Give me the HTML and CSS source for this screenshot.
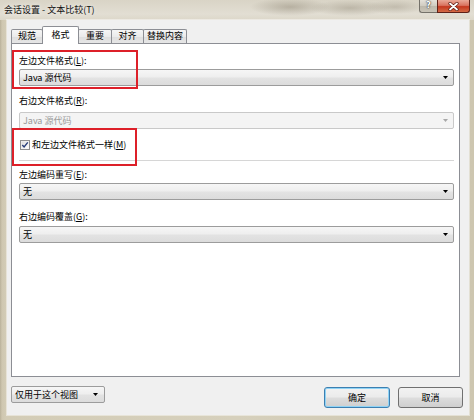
FILE: index.html
```html
<!DOCTYPE html>
<html lang="zh-CN">
<head>
<meta charset="utf-8">
<title>会话设置 - 文本比较(T)</title>
<link rel="stylesheet" href="styles.css">
</head>
<body>
<div class="titlebar">
  <span class="title">会话设置 - 文本比较(T)</span>
  <div class="caption">
    <span class="cap-help">?</span>
    <span class="cap-close">
      <svg width="11" height="9" viewBox="0 0 11 9"><path d="M2 1.5 L9 7.5 M9 1.5 L2 7.5" stroke="#5a1a10" stroke-width="3.2" stroke-linecap="round"/><path d="M2 1.5 L9 7.5 M9 1.5 L2 7.5" stroke="#ffffff" stroke-width="1.8" stroke-linecap="round"/></svg>
    </span>
  </div>
</div>
<div class="client">
  <div class="tabs">
    <span class="tab t1">规范</span>
    <span class="tab active t2">格式</span>
    <span class="tab t3">重要</span>
    <span class="tab t4">对齐</span>
    <span class="tab t5">替换内容</span>
  </div>
  <div class="panel">
    <div class="label l1">左边文件格式(<u>L</u>):</div>
    <div class="combo c1"><span>Java 源代码</span><svg class="arrow" width="5" height="3" viewBox="0 0 5 3"><path d="M0 0 H5 L2.5 3 Z" fill="#000"/></svg></div>
    <div class="label l2 dim-none">右边文件格式(<u>R</u>):</div>
    <div class="combo c2 disabled"><span>Java 源代码</span><svg class="arrow" width="5" height="3" viewBox="0 0 5 3"><path d="M0 0 H5 L2.5 3 Z" fill="#a8a8a8"/></svg></div>
    <div class="checkrow">
      <svg class="checkbox" width="10" height="10" viewBox="0 0 10 10">
        <defs><linearGradient id="cb" x1="0" y1="0" x2="1" y2="1"><stop offset="0" stop-color="#dcdcdc"/><stop offset="1" stop-color="#ffffff"/></linearGradient></defs>
        <rect x="0.5" y="0.5" width="9" height="9" fill="#f4f4f4" stroke="#8f8f8f"/>
        <rect x="1.5" y="1.5" width="7" height="7" fill="url(#cb)"/>
        <path d="M2.3 5 L4.1 7 L7.8 2.4" fill="none" stroke="#263c78" stroke-width="1.4"/>
      </svg>
      <span>和左边文件格式一样(<u>M</u>)</span>
    </div>
    <div class="separator"></div>
    <div class="label l3">左边编码重写(<u>E</u>):</div>
    <div class="combo c3"><span>无</span><svg class="arrow" width="5" height="3" viewBox="0 0 5 3"><path d="M0 0 H5 L2.5 3 Z" fill="#000"/></svg></div>
    <div class="label l4">右边编码覆盖(<u>G</u>):</div>
    <div class="combo c4"><span>无</span><svg class="arrow" width="5" height="3" viewBox="0 0 5 3"><path d="M0 0 H5 L2.5 3 Z" fill="#000"/></svg></div>
  </div>
  <div class="footer">
    <div class="combo small"><span>仅用于这个视图</span><svg class="arrow" width="5" height="3" viewBox="0 0 5 3"><path d="M0 0 H5 L2.5 3 Z" fill="#000"/></svg></div>
    <div class="buttons">
      <span class="btn default">确定</span>
      <span class="btn cancel">取消</span>
    </div>
  </div>
</div>
<div class="mark mark1"></div>
<div class="mark mark2"></div>
</body>
</html>
```

FILE: styles.css
```css
html, body {
  margin: 0;
  padding: 0;
}

body {
  width: 474px;
  height: 420px;
  overflow: hidden;
  position: relative;
  font-family: "Noto Sans CJK SC", "Noto Sans", sans-serif;
  font-size: 9px;
  color: #000;
  background:
    linear-gradient(90deg, #b9b19a 0px, #cfc7b0 2px, #d3ccb6 6px, #d6d0bc 50%, #cdc6b0 100%);
}

.titlebar {
  height: 20px;
  display: flex;
  justify-content: space-between;
  align-items: flex-start;
  background:
    radial-gradient(ellipse 40px 9px at 290px 7px, rgba(110, 100, 80, 0.35), rgba(110, 100, 80, 0) 100%),
    radial-gradient(ellipse 40px 8px at 350px 8px, rgba(110, 100, 80, 0.3), rgba(110, 100, 80, 0) 100%),
    radial-gradient(ellipse 30px 7px at 395px 7px, rgba(110, 100, 80, 0.25), rgba(110, 100, 80, 0) 100%),
    linear-gradient(180deg, #d9d4c6 0%, #e2ded3 70%, #dcd7c9 100%);
}

.title {
  padding-left: 4px;
  line-height: 20px;
  font-size: 9px;
  color: #111;
  text-shadow: 0 0 5px rgba(255, 255, 255, 0.9);
}

.caption {
  display: flex;
  margin-right: 4px;
}

.cap-help {
  width: 18px;
  height: 13px;
  box-sizing: border-box;
  border: 1px solid #75726a;
  border-top: none;
  border-right: none;
  border-radius: 0 0 0 3px;
  background: linear-gradient(180deg, #e4e1d9 0%, #cfcbc0 50%, #bdb8ab 51%, #c9c4b7 100%);
  display: flex;
  align-items: center;
  justify-content: center;
  color: #fff;
  font-family: "DejaVu Sans", sans-serif;
  font-weight: bold;
  font-size: 8px;
  line-height: 12px;
  text-shadow: 0 0 2px #333, 0 0 1px #333;
}

.cap-close {
  width: 33px;
  height: 13px;
  box-sizing: border-box;
  border: 1px solid #5e2118;
  border-top: none;
  border-radius: 0 0 3px 0;
  background: linear-gradient(180deg, #e9a897 0%, #d9735f 45%, #c5381f 55%, #d36a45 100%);
  display: flex;
  align-items: center;
  justify-content: center;
}

.client {
  margin: 0 5px 0 7px;
  height: 395px;
  box-sizing: border-box;
  background: #f0f0f0;
  padding: 6px 6px 0 4px;
  box-shadow: 0 0 0 1px rgba(255, 255, 255, 0.45);
}

/* tabs */
.tabs {
  display: flex;
  align-items: flex-end;
  height: 17px;
}

.tab {
  height: 14px;
  box-sizing: border-box;
  border: 1px solid #8c8e94;
  border-bottom: none;
  background: linear-gradient(180deg, #f5f5f5 0%, #ebebeb 50%, #dedede 51%, #e6e6e6 100%);
  line-height: 12px;
  text-align: center;
  font-size: 9px;
  border-radius: 2px 2px 0 0;
}

.tab + .tab {
  margin-left: -1px;
}

.tab.active {
  height: 18px;
  background: #fff;
  line-height: 15px;
  margin-bottom: -1px;
  position: relative;
  z-index: 1;
}

.t1 { width: 32px; }
.t2 { width: 37px; }
.t3 { width: 34px; }
.t4 { width: 33px; }
.t5 { width: 44px; }

/* panel */
.panel {
  height: 334px;
  box-sizing: border-box;
  margin-right: 3px;
  border: 1px solid #8c8e94;
  background: #fff;
  padding: 10px 5px 0 7px;
  display: flex;
  flex-direction: column;
}

.label {
  height: 13px;
  line-height: 13px;
  font-size: 9px;
  color: #000;
}

.l2 { margin-top: 8px; }
.l3 { margin-top: 7px; }
.l4 { margin-top: 10px; }

.combo {
  height: 17px;
  box-sizing: border-box;
  border: 1px solid #9c9c9c;
  border-radius: 2px;
  background: linear-gradient(180deg, #f6f6f6 0%, #eeeeee 48%, #e3e3e3 52%, #dcdcdc 100%);
  display: flex;
  align-items: center;
  justify-content: space-between;
  padding: 0 5px 0 3px;
  font-size: 9px;
  line-height: 15px;
}

.c1 { margin-top: 2px; }
.c2 { margin-top: 5px; }
.c3 { margin-top: 2px; }
.c4 { margin-top: 3px; }

.combo.disabled {
  background: #f4f4f4;
  border-color: #c9c9c9;
  color: #9a9a9a;
}

.arrow {
  flex: none;
}

.checkrow {
  margin-top: 9px;
  height: 13px;
  display: flex;
  align-items: center;
  gap: 2px;
  line-height: 13px;
}

.checkbox {
  margin-left: 1px;
  flex: none;
}

.separator {
  margin-top: 9px;
  height: 1px;
  background: #d6d6d6;
}

/* footer */
.footer {
  display: flex;
  align-items: flex-start;
  margin-top: 9px;
}

.combo.small {
  width: 94px;
  padding-right: 6px;
}

.buttons {
  margin-left: auto;
  margin-top: 1px;
  display: flex;
  gap: 8px;
}

.btn {
  height: 21px;
  box-sizing: border-box;
  border: 1px solid #707070;
  border-radius: 3px;
  background: linear-gradient(180deg, #f2f2f2 0%, #ebebeb 48%, #dddddd 52%, #cfcfcf 100%);
  display: flex;
  align-items: center;
  justify-content: center;
  font-size: 9px;
}

.btn.default {
  width: 66px;
  border-color: #3c7fb1;
  box-shadow: inset 0 0 0 1px #8fd3f5;
}

.btn.cancel {
  width: 65px;
}

/* red annotation boxes drawn over the dialog */
.mark {
  position: absolute;
  box-sizing: border-box;
  border: 2px solid #dd2029;
}

.mark1 {
  left: 12px;
  top: 50px;
  width: 126px;
  height: 39px;
}

.mark2 {
  left: 12px;
  top: 128px;
  width: 125px;
  height: 38px;
}
```
